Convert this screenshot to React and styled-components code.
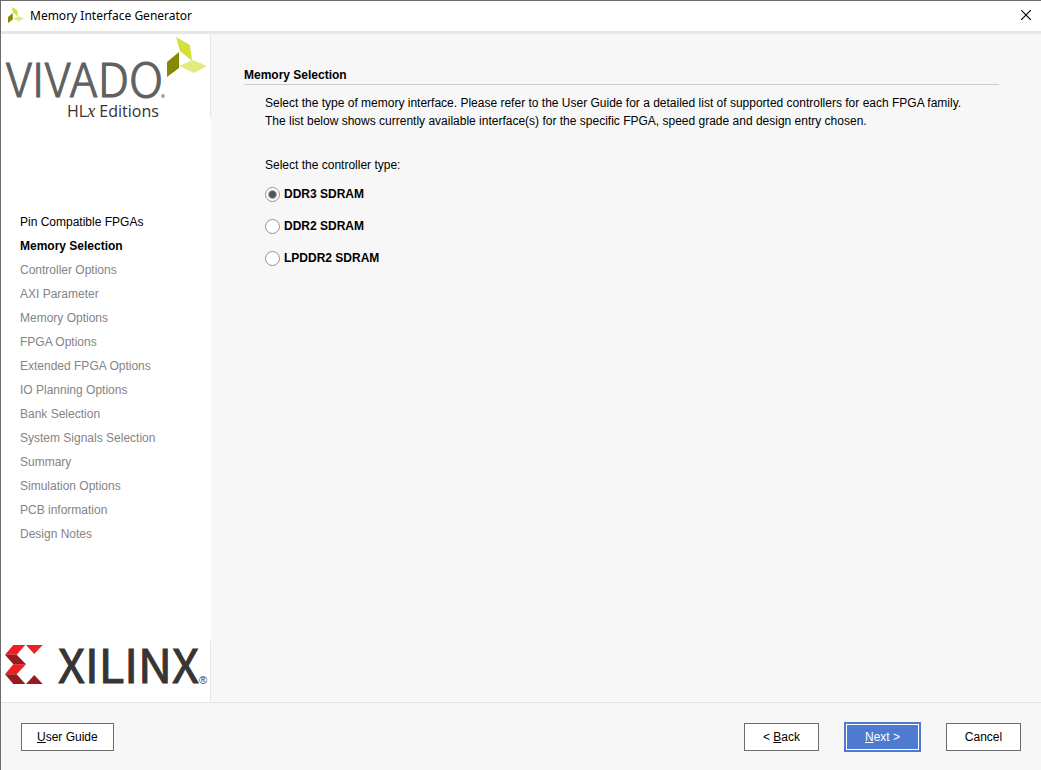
import React, { useState } from "react";
import styled, { createGlobalStyle } from "styled-components";

const GlobalStyle = createGlobalStyle`
  * { box-sizing: border-box; }
  body { margin: 0; background: #f7f7f7; }
  h1, h2, p, ol, fieldset, legend { margin: 0; padding: 0; border: 0; font: inherit; }
  button, input { font: inherit; }
`;

const Window = styled.div`
  display: flex;
  flex-direction: column;
  min-height: 100vh;
  border: solid #6c6c6c;
  border-width: 1px 0 0 1px;
  background: #f7f7f7;
  color: #000;
  font: 12px/18px "Liberation Sans", Arial, sans-serif;
`;

const TitleBar = styled.header`
  display: flex;
  align-items: center;
  height: 33px;
  padding: 0 8px 2px 7px;
  border-bottom: 3px solid #e6e6e6;
  background: #fff;
`;

const Title = styled.h1`
  flex: 1;
  margin-left: 6px;
  padding-top: 1px;
  font: 12px/18px "Noto Sans", "Open Sans", sans-serif;
`;

const CloseButton = styled.button`
  display: flex;
  align-items: center;
  justify-content: center;
  width: 14px;
  height: 20px;
  padding: 0;
  border: 0;
  background: none;
`;

const Body = styled.div`
  display: flex;
  flex: 1;
`;

const Sidebar = styled.aside`
  display: flex;
  flex-direction: column;
  width: 210px;
  background: #fff;
`;

const LogoPanel = styled.div`
  border-right: 1px solid #e6e6e6;
  svg { display: block; overflow: visible; }
`;

const Steps = styled.ol`
  flex: 1;
  padding: 92px 19px 0;
  list-style: none;
`;

const Step = styled.li`
  line-height: 24px;
  color: ${(p) => (p.$state === "pending" ? "#848484" : "#000")};
  font-weight: ${(p) => (p.$state === "current" ? 700 : 400)};
`;

const Content = styled.main`
  flex: 1;
  min-width: 0;
  padding: 32px 42px 0 33px;
`;

const Heading = styled.h2`
  border-bottom: 1px solid #cccccc;
  font-weight: 700;
`;

const Details = styled.div`
  padding: 9px 0 0 21px;
`;

const Options = styled.fieldset`
  margin-top: 26px;
`;

const Legend = styled.legend`
  margin-bottom: 4px;
`;

const Option = styled.label`
  display: flex;
  align-items: center;
  gap: 4px;
  height: 32px;
  font-weight: 700;
`;

const Radio = styled.input`
  appearance: none;
  width: 15px;
  height: 15px;
  margin: 0;
  border: 1px solid #949494;
  border-radius: 50%;
  background: #fff;
  &:checked { background: radial-gradient(circle, #555 0 3px, #fff 5px); }
`;

const Footer = styled.footer`
  display: flex;
  gap: 25px;
  align-items: center;
  height: 68px;
  padding: 0 20px;
  border-top: 1px solid #e4e4e4;
`;

const Spacer = styled.div`
  flex: 1;
`;

const Button = styled.button`
  height: 28px;
  min-width: 75px;
  padding: 0 15px;
  border: 1px solid #6c6c6c;
  border-radius: 0;
  background: #fff;
  color: #000;
`;

const PrimaryButton = styled(Button)`
  border-color: #fff;
  background: #4e7bd1;
  color: #fff;
  outline: 2px solid #4e7bd1;
  min-width: 73px;
  height: 26px;
  margin: 0 2px;
`;

const TriadMark = () => (
  <>
    <path d="M9 0 L23 8 L25 24 L13 14Z" fill="#d5df3b" />
    <path d="M0 25 L12 15 V31 L0 40Z" fill="#848a05" />
    <path d="M12 29 L26 23 L40 29 L27 36Z" fill="#e2ea80" />
  </>
);

const VivadoLogo = () => (
  <svg width="209" height="84" role="img" aria-label="Vivado HLx Editions">
    <g transform="translate(166 3)"><TriadMark /></g>
    <text x="5" y="63" fontFamily="'Noto Sans CJK SC', sans-serif" fontWeight="300" fontSize="47" fill="#606060" stroke="#606060" strokeWidth="1">VIVADO</text>
    <circle cx="162" cy="62" r="2" fill="#aaa" />
    <text x="66" y="83" fontFamily="'Open Sans', sans-serif" fontSize="16" fill="#333">
      HL<tspan fontFamily="'Liberation Serif', serif" fontStyle="italic" fontSize="18">x</tspan> Editions
    </text>
  </svg>
);

const XilinxLogo = () => (
  <svg width="209" height="61" role="img" aria-label="Xilinx">
    <path d="M12.3 4 H24.3 L15.7 13.7 H4Z M12.3 23.3 H25 L15.7 33.3 H4Z M25 4 H41.7 L33.3 13Z" fill="#ed2024" />
    <path d="M4 13.7 H15.7 L25 23.3 H12.3Z M4 33.3 H15.7 L24.3 43 H12.3Z M25 43 L33.3 34 L41.7 43Z" fill="#981b1f" />
    <text x="57" y="42" fontFamily="'Noto Sans CJK SC', sans-serif" fontSize="47" fill="#363534" stroke="#363534" strokeWidth="1">XILINX</text>
    <text x="198" y="43" fontFamily="'Liberation Sans', sans-serif" fontSize="11" fill="#363534">®</text>
  </svg>
);

const steps = [
  "Pin Compatible FPGAs", "Memory Selection", "Controller Options", "AXI Parameter",
  "Memory Options", "FPGA Options", "Extended FPGA Options", "IO Planning Options",
  "Bank Selection", "System Signals Selection", "Summary", "Simulation Options",
  "PCB information", "Design Notes",
];
const current = 1;
const controllers = ["DDR3 SDRAM", "DDR2 SDRAM", "LPDDR2 SDRAM"];

export default function App() {
  const [controller, setController] = useState(controllers[0]);
  return (
    <Window>
      <GlobalStyle />
      <TitleBar>
        <svg width="16" height="16" viewBox="0 0 40 40" aria-hidden="true"><TriadMark /></svg>
        <Title>Memory Interface Generator</Title>
        <CloseButton aria-label="Close">
          <svg width="10" height="10" stroke="#000" strokeWidth="1.2"><path d="M0 0 L10 10 M10 0 L0 10" /></svg>
        </CloseButton>
      </TitleBar>
      <Body>
        <Sidebar>
          <LogoPanel><VivadoLogo /></LogoPanel>
          <Steps>
            {steps.map((name, i) => (
              <Step key={name} $state={i < current ? "done" : i === current ? "current" : "pending"}
                aria-current={i === current ? "step" : undefined}>{name}</Step>
            ))}
          </Steps>
          <LogoPanel><XilinxLogo /></LogoPanel>
        </Sidebar>
        <Content>
          <Heading>Memory Selection</Heading>
          <Details>
            <p>
              Select the type of memory interface. Please refer to the User Guide for a detailed list of supported controllers for each FPGA family.
              <br />
              The list below shows currently available interface(s) for the specific FPGA, speed grade and design entry chosen.
            </p>
            <Options>
              <Legend>Select the controller type:</Legend>
              {controllers.map((name) => (
                <Option key={name}>
                  <Radio type="radio" name="controller" checked={controller === name} onChange={() => setController(name)} />
                  {name}
                </Option>
              ))}
            </Options>
          </Details>
        </Content>
      </Body>
      <Footer>
        <Button><u>U</u>ser Guide</Button>
        <Spacer />
        <Button>&lt; <u>B</u>ack</Button>
        <PrimaryButton><u>N</u>ext &gt;</PrimaryButton>
        <Button>Cancel</Button>
      </Footer>
    </Window>
  );
}
